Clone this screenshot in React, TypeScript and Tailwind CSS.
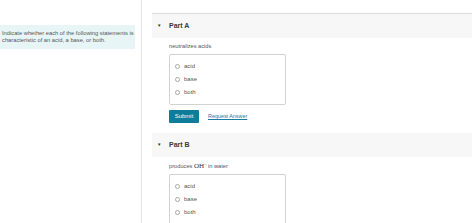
import React from 'react'

const FONT = { fontFamily: '"Liberation Sans", Arial, sans-serif' }

function Radio({ label }: { label: string }) {
  return (
    <label className="flex h-[13px] items-center gap-[4px] pl-[5px]">
      <span className="h-[5px] w-[5px] rounded-full border border-[#a8a8a8] bg-white" />
      <span className="text-[6px] text-[#555]">{label}</span>
    </label>
  )
}

function Options() {
  return (
    <div className="w-[117px] rounded-[2px] border border-[#d2d2d2] bg-white py-[5px]">
      <Radio label="acid" />
      <Radio label="base" />
      <Radio label="both" />
    </div>
  )
}

function PartHeader({ title }: { title: string }) {
  return (
    <div className="flex h-[24px] items-center bg-[#f7f7f7] pl-[5px]">
      <span className="w-[12px] text-[4.5px] text-[#333]">▼</span>
      <span className="text-[7px] font-semibold text-[#3a3a3a]">{title}</span>
    </div>
  )
}

export default function App() {
  return (
    <div className="flex h-[223px] w-[474px] overflow-hidden bg-white" style={FONT}>
      {/* Left: question stem */}
      <div className="w-[142px] shrink-0 border-r border-[#e6e6e6] pt-[25px]">
        <div className="mr-[6px] bg-[#e8f5f7] py-[5px] pl-[2px] pr-[1px] text-[5.75px] leading-[7px] text-[#555]">
          Indicate whether each of the following statements is characteristic of an acid, a base, or both.
        </div>
      </div>

      {/* Right: parts */}
      <div className="flex-1 pl-[10px] pr-[2px] pt-[13px]">
        <div className="border-t border-[#dcdcdc]">
          <PartHeader title="Part A" />
          <div className="pl-[17px] pt-[5px]">
            <p className="h-[8px] text-[5.7px] leading-[7px] text-[#555]">neutralizes acids</p>
            <div className="mt-[3px]">
              <Options />
            </div>
            <div className="mt-[5px] flex items-center gap-[9px]">
              <button className="h-[13px] w-[30px] rounded-[1px] bg-[#0f7c99] text-[6px] text-white">
                Submit
              </button>
              <a className="text-[5.4px] text-[#1b7aa3] underline">Request Answer</a>
            </div>
          </div>
        </div>

        <div className="mt-[10px]">
          <PartHeader title="Part B" />
          <div className="pl-[17px] pt-[6px]">
            <p className="h-[8px] text-[5.7px] leading-[7px] text-[#555]">
              produces{' '}
              <span className="text-[7px] text-[#333]" style={{ fontFamily: '"Liberation Serif", serif' }}>
                OH<sup className="text-[4px]">−</sup>
              </span>{' '}
              in water
            </p>
            <div className="mt-[3px]">
              <Options />
            </div>
          </div>
        </div>
      </div>
    </div>
  )
}
